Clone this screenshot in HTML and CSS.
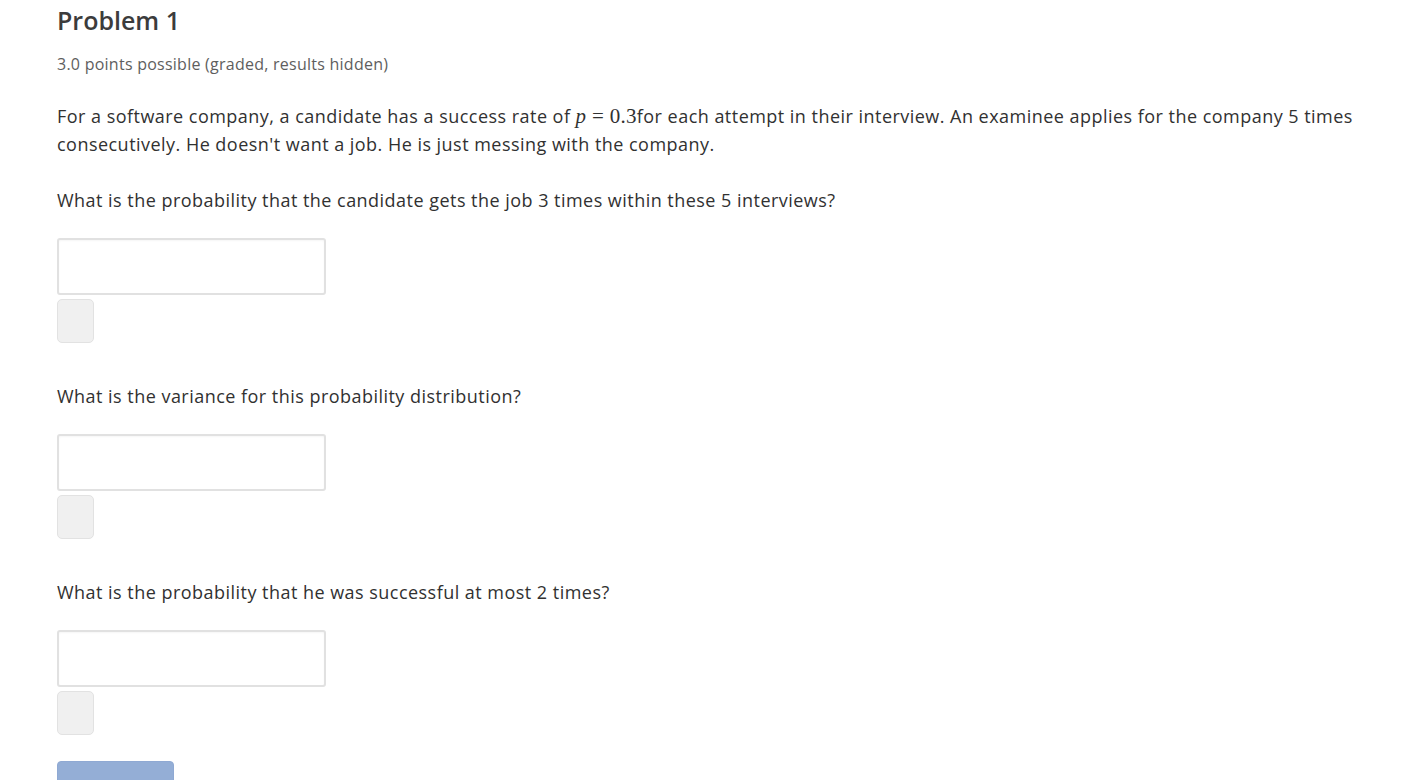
FILE: index.html
```html
<!DOCTYPE html>
<html>
<head>
<meta charset="utf-8">
<link rel="stylesheet" href="styles.css">
</head>
<body>
<main class="problem">
  <h2 class="title">Problem 1</h2>
  <div class="meta">3.0 points possible (graded, results hidden)</div>
  <p class="text">For a software company, a candidate has a success rate of <span class="math"><i>p</i> = 0.3</span>for each attempt in their interview. An examinee applies for the company 5 times consecutively. He doesn't want a job. He is just messing with the company.</p>
  <section class="question">
    <p class="text">What is the probability that the candidate gets the job 3 times within these 5 interviews?</p>
    <div class="answer"><input class="field" type="text"><span class="status"></span></div>
  </section>
  <section class="question">
    <p class="text">What is the variance for this probability distribution?</p>
    <div class="answer"><input class="field" type="text"><span class="status"></span></div>
  </section>
  <section class="question">
    <p class="text">What is the probability that he was successful at most 2 times?</p>
    <div class="answer"><input class="field" type="text"><span class="status"></span></div>
  </section>
  <div class="actions">
    <button class="submit">Submit</button>
    <span class="attempts">You have used 0 of 1 attempt</span>
  </div>
</main>
</body>
</html>
```
FILE: styles.css
```css
html, body {
  margin: 0;
  padding: 0;
  background: #fff;
}
body {
  font-family: "Open Sans", "Noto Sans", sans-serif;
  color: #313131;
  overflow: hidden;
  height: 780px;
}
.problem {
  padding: 0 40px 0 57px;
}
.title {
  margin: 0;
  padding-top: 3px;
  font-size: 25px;
  font-weight: 600;
  line-height: 34px;
  color: #3c3c3c;
}
.meta {
  margin-top: 16px;
  font-size: 16px;
  letter-spacing: 0.25px;
  line-height: 22px;
  color: #5e5e5e;
}
.text {
  margin: 0;
  font-size: 18px;
  letter-spacing: 0.47px;
  line-height: 28px;
  color: #313131;
}
.problem > .text {
  margin-top: 27px;
}
.math {
  font-family: "Liberation Serif", "DejaVu Serif", serif;
  font-size: 21px;
  letter-spacing: 0.3px;
}
.question {
  margin-top: 28px;
}
.question + .question {
  margin-top: 39px;
}
.answer {
  display: flex;
  flex-direction: column;
  align-items: flex-start;
  gap: 4px;
  margin-top: 24px;
}
.field {
  box-sizing: border-box;
  width: 269px;
  height: 57px;
  margin: 0;
  border: 2px solid #e1e1e1;
  border-radius: 3px;
  background: #fff;
  box-shadow: inset 0 1px 2px rgba(0,0,0,0.04);
}
.status {
  box-sizing: border-box;
  width: 37px;
  height: 44px;
  border: 1px solid #e2e2e2;
  border-radius: 5px;
  background: #f0f0f0;
}
.actions {
  display: flex;
  align-items: flex-start;
  gap: 20px;
  margin-top: 26px;
}
.submit {
  width: 117px;
  height: 52px;
  border: 1px solid #8fa9d3;
  border-radius: 4px;
  background: #94aed6;
  color: #fff;
  font-family: inherit;
  font-size: 16px;
  padding-top: 8px;
}
.attempts {
  padding-top: 14px;
  font-size: 16px;
  color: #414141;
}
```
